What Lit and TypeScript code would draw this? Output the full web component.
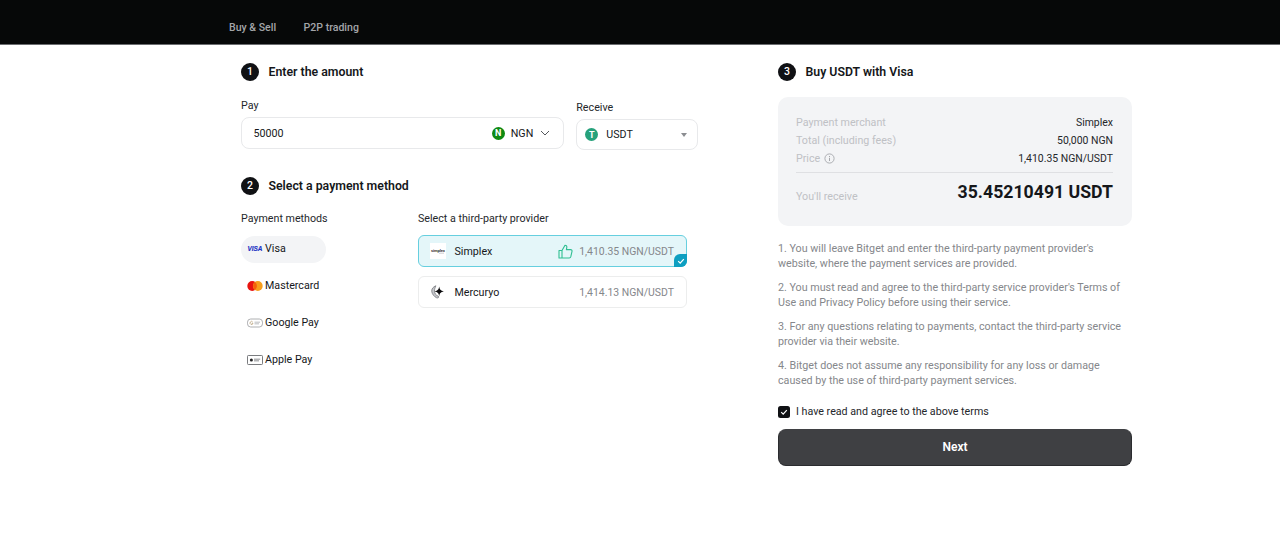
import { LitElement, html, css, svg } from "lit";
import { customElement } from "lit/decorators.js";

const chevron = html`<svg class="chev" viewBox="0 0 10 6" width="10" height="6"><path d="M1 1l4 4 4-4" fill="none" stroke="#55585c" stroke-width="1"/></svg>`;
const caret = html`<svg viewBox="0 0 6 4" width="6" height="4"><path d="M0 0h6L3 4z" fill="#8b8d91"/></svg>`;
const visa = svg`<svg class="mi" viewBox="0 0 16 12" width="16" height="12"><text x="8" y="8.400" text-anchor="middle" font-family="Liberation Sans" font-size="6.400" font-weight="700" font-style="italic" fill="#1a30c4" stroke="#1a30c4" stroke-width=".15">VISA</text></svg>`;
const master = html`<svg class="mi" viewBox="0 0 16 12" width="16" height="12"><circle cx="5.200" cy="6" r="4.900" fill="#e8130f"/><circle cx="10.800" cy="6" r="4.900" fill="#f79e1b"/><path d="M8 2.100a4.900 4.900 0 0 1 0 7.800 4.900 4.900 0 0 1 0-7.800z" fill="#f4600c"/></svg>`;
const gpay = html`<svg class="mi" viewBox="0 0 16 12" width="16" height="12"><rect x=".5" y="2" width="15" height="8" rx="3.200" fill="#fff" stroke="#9a9ca0" stroke-width=".8"/><path d="M5.700 5A1.500 1.500 0 1 0 6 6.300H4.700" fill="none" stroke="#b9a27c" stroke-width=".8"/><path d="M7.500 4.800h5.500v.8H7.500zM7.500 6.500h4.500v.8H7.500z" fill="#a4a6aa"/></svg>`;
const apay = html`<svg class="mi" viewBox="0 0 16 12" width="16" height="12"><rect x=".5" y="1.500" width="15" height="9" rx=".8" fill="#fff" stroke="#6b6d71" stroke-width=".9"/><circle cx="4.400" cy="6" r="1.500" fill="#222"/><path d="M7 4.800h6.200v.8H7zM7 6.500h5v.8H7z" fill="#66686c"/></svg>`;
const thumb = html`<svg viewBox="0 0 15 15" width="15" height="15"><path d="M1 6.500h3V14H1zM4 6.500L7 1.200c1.400 0 2 1 1.800 2.200L8.400 5.600h4.200c1 0 1.600.8 1.400 1.700l-1.200 5.400c-.2.8-.8 1.300-1.600 1.300H4" fill="none" stroke="#2fbf92" stroke-width="1.100" stroke-linejoin="round"/></svg>`;
const simplex = svg`<svg viewBox="0 0 16 16" width="16" height="16"><rect width="16" height="16" fill="#fff"/><text x="8" y="8.800" text-anchor="middle" font-family="Liberation Sans" font-size="4" font-weight="700" fill="#1d1d20" textLength="14">simplex</text><path d="M9 10.200h5" stroke="#b9bbc0" stroke-width=".7"/></svg>`;
const mercuryo = html`<svg viewBox="0 0 16 16" width="16" height="16"><path d="M6 1.800C3.200 2.600 1.300 5 1.800 7.800c.4 2.300 2.400 5 4.900 6 1.500.5 2.400-.4 1.800-1.500C6 11.500 4.500 9.500 4.500 7.200 4.500 5 5 3.200 6 1.800z" fill="#c4c6ca" stroke="#77797d" stroke-width=".8"/><path d="M9.200 2.600c.5 3 1.400 4 4.600 4.800-3.200.6-4.100 1.700-4.600 4.800-.5-3.100-1.400-4.200-4.600-4.800C7.800 6.600 8.700 5.600 9.200 2.600z" fill="#0c0c0e"/></svg>`;

@customElement("app-root")
export class AppRoot extends LitElement {
  static styles = css`
    :host { display: block; height: 541px; background: #fff; color: #15171a; font-family: Roboto, "Liberation Sans", sans-serif; font-size: 10.700px; overflow: hidden; }
    header { background: #060808; border-bottom: 1px solid #6b6d70; display: flex; align-items: center; gap: 27.500px; padding: 11.500px 0 0 229px; box-sizing: border-box; height: 44.500px; color: #a3a5a8; font-weight: 500; font-size: 10.550px; }
    main { display: flex; gap: 80px; padding: 18.500px 0 0 241px; }
    .left { width: 457px; }
    .right { width: 354px; }
    .step { display: flex; align-items: center; gap: 9.500px; height: 18px; font-size: 12.300px; font-weight: 600; line-height: 18px; }
    .num { width: 18px; height: 18px; border-radius: 50%; background: #101114; color: #fff; font-size: 10.500px; font-weight: 500; display: flex; align-items: center; justify-content: center; }
    .amount { display: flex; gap: 12px; align-items: flex-end; margin-top: 18px; }
    .lbl { line-height: 14px; margin-bottom: 4px; color: #25272b; }
    .pay { width: 324px; }
    .recv { width: 122px; }
    .box { box-sizing: border-box; border: 1px solid #e8e9eb; border-radius: 8px; display: flex; align-items: center; background: #fff; }
    .pay .box { height: 32px; padding: 0 13px 0 11.500px; margin-bottom: 2px; }
    .recv .box { height: 31px; padding: 0 10px 0 8px; margin-bottom: 1px; }
    .val { flex: 1; }
    .coin { width: 13px; height: 13px; border-radius: 50%; display: flex; align-items: center; justify-content: center; color: #fff; font-size: 9px; font-weight: 700; }
    .ngn { background: #0f8a12; margin-right: 6px; }
    .usdt { background: #26a17b; margin-right: 8px; }
    .chev { margin-left: 7px; }
    .s2 { margin-top: 25.500px; }
    .pm { display: flex; margin-top: 17px; }
    .methods { width: 177px; }
    .phead { line-height: 14px; color: #25272b; }
    .mlist { display: flex; flex-direction: column; gap: 10px; margin-top: 10px; align-items: flex-start; }
    .m { box-sizing: border-box; width: 85px; height: 27px; border-radius: 14px; padding: 0 0 1px 6px; display: flex; align-items: center; gap: 2px; }
    .m.on { background: #f3f4f6; }
    .providers { width: 269px; }
    .plist { display: flex; flex-direction: column; gap: 8.500px; margin-top: 9px; }
    .p { box-sizing: border-box; position: relative; height: 32.500px; border: 1px solid #eceded; border-radius: 6px; display: flex; align-items: center; padding: 1px 12px 0 11px; gap: 8.500px; }
    .p.on { background: #e4f6f9; border-color: #66cfdf; }
    .pname { flex: 1; }
    .rate { color: #85878b; font-size: 10.450px; }
    .thumb { display: flex; margin-right: -2px; }
    .tick { position: absolute; right: -1px; bottom: -1px; width: 13px; height: 13px; background: #0d9fc1; border-radius: 6px 0 6px 0; display: flex; align-items: center; justify-content: center; }
    .card { margin-top: 16px; height: 129px; box-sizing: border-box; background: #f3f4f6; border-radius: 10px; padding: 16px 19px 0 18px; }
    .row { display: flex; justify-content: space-between; align-items: center; height: 18px; color: #25272b; font-size: 10.450px; }
    .k { color: #bfc1c5; font-size: 10.700px; display: flex; align-items: center; gap: 4px; }
    .big { margin-top: 5px; padding-top: 6px; border-top: 1px solid #dfe0e3; display: flex; justify-content: space-between; align-items: center; height: 33px; }
    .big .k { margin-top: 1px; }
    .amt { font-size: 17.700px; font-weight: 700; color: #15171a; margin-top: -8px; }
    .terms { margin-top: 14.500px; color: #85878b; line-height: 15px; font-size: 10.720px; }
    .terms p { margin: 0 0 9px; }
    .agree { display: flex; align-items: center; gap: 6px; height: 14px; margin-top: 17px; color: #25272b; }
    .cb { width: 12px; height: 12px; background: #101114; border-radius: 2.500px; display: flex; align-items: center; justify-content: center; }
    .next { margin-top: 10px; height: 37px; box-sizing: border-box; background: #3f4043; border: 1px solid #2b2c2f; border-top-color: #3f4043; border-radius: 8px; color: #fff; display: flex; align-items: center; justify-content: center; font-size: 12px; font-weight: 600; }
    svg { display: block; flex: none; }
  `;
  render() {
    const check = html`<svg viewBox="0 0 10 10" width="8" height="8"><path d="M1.500 5.200l2.500 2.500 4.500-5" fill="none" stroke="#fff" stroke-width="1.500"/></svg>`;
    return html`
      <header><span>Buy &amp; Sell</span><span>P2P trading</span></header>
      <main>
        <section class="left">
          <div class="step"><span class="num">1</span>Enter the amount</div>
          <div class="amount">
            <div class="pay"><div class="lbl">Pay</div>
              <div class="box"><span class="val">50000</span><span class="coin ngn">N</span>NGN${chevron}</div></div>
            <div class="recv"><div class="lbl">Receive</div>
              <div class="box"><span class="coin usdt">T</span><span class="val">USDT</span>${caret}</div></div>
          </div>
          <div class="step s2"><span class="num">2</span>Select a payment method</div>
          <div class="pm">
            <div class="methods"><div class="phead">Payment methods</div>
              <div class="mlist">
                <div class="m on">${visa}Visa</div>
                <div class="m">${master}Mastercard</div>
                <div class="m">${gpay}Google Pay</div>
                <div class="m">${apay}Apple Pay</div>
              </div></div>
            <div class="providers"><div class="phead">Select a third-party provider</div>
              <div class="plist">
                <div class="p on">${simplex}<span class="pname">Simplex</span><span class="thumb">${thumb}</span><span class="rate">1,410.35 NGN/USDT</span><span class="tick">${check}</span></div>
                <div class="p">${mercuryo}<span class="pname">Mercuryo</span><span class="rate">1,414.13 NGN/USDT</span></div>
              </div></div>
          </div>
        </section>
        <section class="right">
          <div class="step"><span class="num">3</span>Buy USDT with Visa</div>
          <div class="card">
            <div class="row"><span class="k">Payment merchant</span><span>Simplex</span></div>
            <div class="row"><span class="k">Total (including fees)</span><span>50,000 NGN</span></div>
            <div class="row"><span class="k">Price <svg viewBox="0 0 11 11" width="11" height="11"><circle cx="5.500" cy="5.500" r="4.600" fill="none" stroke="#a5a7ab" stroke-width=".9"/><path d="M5.500 4.800v3.200M5.500 3v1" stroke="#a5a7ab" stroke-width="1"/></svg></span><span>1,410.35 NGN/USDT</span></div>
            <div class="big"><span class="k">You'll receive</span><span class="amt">35.45210491 USDT</span></div>
          </div>
          <div class="terms">
            <p>1. You will leave Bitget and enter the third-party payment provider's website, where the payment services are provided.</p>
            <p>2. You must read and agree to the third-party service provider's Terms of Use and Privacy Policy before using their service.</p>
            <p>3. For any questions relating to payments, contact the third-party service provider via their website.</p>
            <p>4. Bitget does not assume any responsibility for any loss or damage caused by the use of third-party payment services.</p>
          </div>
          <div class="agree"><span class="cb">${check}</span>I have read and agree to the above terms</div>
          <div class="next">Next</div>
        </section>
      </main>`;
  }
}
